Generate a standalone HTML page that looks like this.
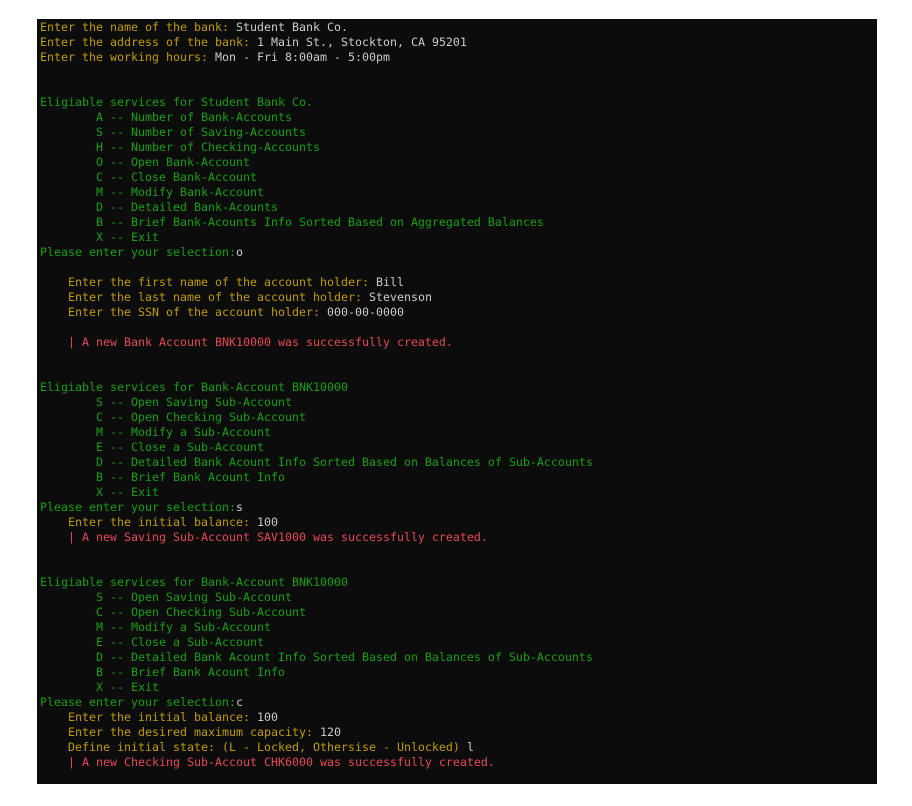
<!DOCTYPE html>
<html><head><style>
html,body{margin:0;padding:0;background:#fff;width:912px;height:806px;overflow:hidden}
#t{position:absolute;left:37px;top:19px;width:840px;height:765px;background:#0c0c0c}
pre{position:absolute;left:3px;top:1px;margin:0;font-family:"DejaVu Sans Mono","Liberation Mono",monospace;font-size:11.63px;line-height:15px;color:#13a10e}
.y{color:#c19c00}.w{color:#cccccc}.r{color:#e74856}.g{color:#13a10e}
</style></head><body><div id="t"><pre><span class="y">Enter the name of the bank: </span><span class="w">Student Bank Co.</span>
<span class="y">Enter the address of the bank: </span><span class="w">1 Main St., Stockton, CA 95201</span>
<span class="y">Enter the working hours: </span><span class="w">Mon - Fri 8:00am - 5:00pm</span>


Eligiable services for Student Bank Co.
        A -- Number of Bank-Accounts
        S -- Number of Saving-Accounts
        H -- Number of Checking-Accounts
        O -- Open Bank-Account
        C -- Close Bank-Account
        M -- Modify Bank-Account
        D -- Detailed Bank-Acounts
        B -- Brief Bank-Acounts Info Sorted Based on Aggregated Balances
        X -- Exit
Please enter your selection:<span class="w">o</span>

<span class="y">    Enter the first name of the account holder: </span><span class="w">Bill</span>
<span class="y">    Enter the last name of the account holder: </span><span class="w">Stevenson</span>
<span class="y">    Enter the SSN of the account holder: </span><span class="w">000-00-0000</span>

<span class="r">    | A new Bank Account BNK10000 was successfully created.</span>


Eligiable services for Bank-Account BNK10000
        S -- Open Saving Sub-Account
        C -- Open Checking Sub-Account
        M -- Modify a Sub-Account
        E -- Close a Sub-Account
        D -- Detailed Bank Acount Info Sorted Based on Balances of Sub-Accounts
        B -- Brief Bank Acount Info
        X -- Exit
Please enter your selection:<span class="w">s</span>
<span class="y">    Enter the initial balance: </span><span class="w">100</span>
<span class="r">    | A new Saving Sub-Account SAV1000 was successfully created.</span>


Eligiable services for Bank-Account BNK10000
        S -- Open Saving Sub-Account
        C -- Open Checking Sub-Account
        M -- Modify a Sub-Account
        E -- Close a Sub-Account
        D -- Detailed Bank Acount Info Sorted Based on Balances of Sub-Accounts
        B -- Brief Bank Acount Info
        X -- Exit
Please enter your selection:<span class="w">c</span>
<span class="y">    Enter the initial balance: </span><span class="w">100</span>
<span class="y">    Enter the desired maximum capacity: </span><span class="w">120</span>
<span class="y">    Define initial state: (L - Locked, Othersise - Unlocked) </span><span class="w">l</span>
<span class="r">    | A new Checking Sub-Accout CHK6000 was successfully created.</span></pre></div></body></html>
